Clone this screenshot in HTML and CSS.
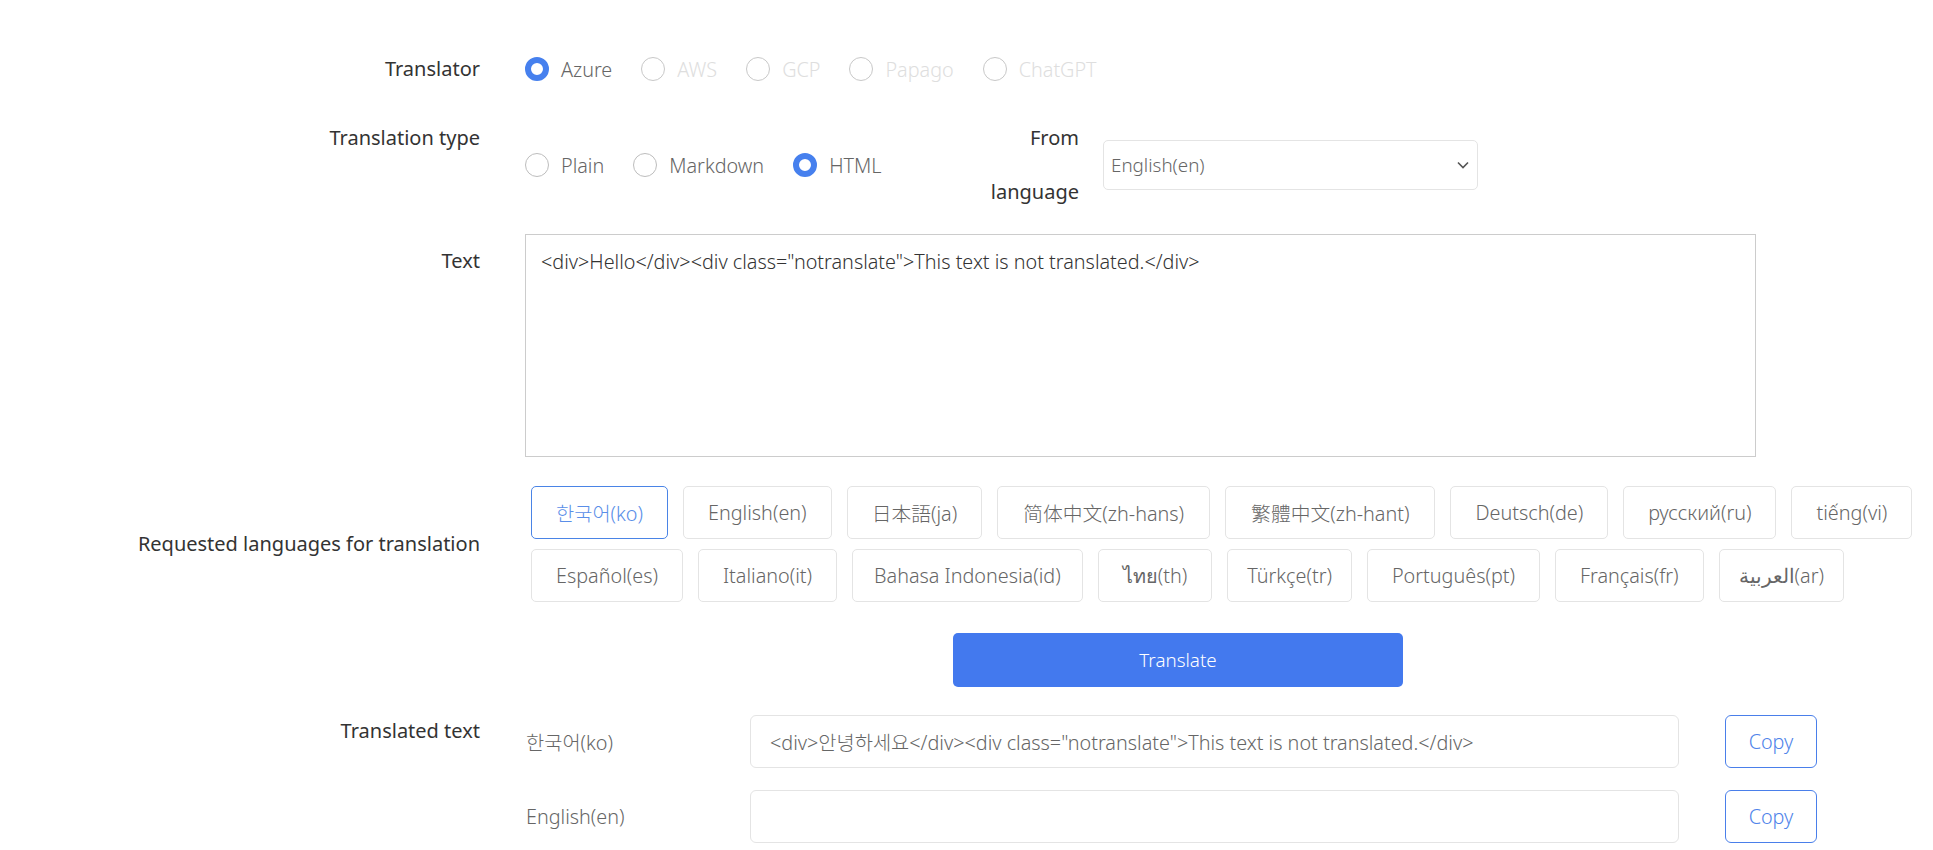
FILE: index.html
```html
<!DOCTYPE html>
<html lang="en">
<head>
<meta charset="utf-8">
<title>Translator</title>
<link rel="stylesheet" href="styles.css">
</head>
<body>
<div class="page">
  <div class="row row-translator">
    <div class="label">Translator</div>
    <div class="content radios">
      <label class="opt"><input type="radio" name="translator" checked><span>Azure</span></label>
      <label class="opt disabled"><input type="radio" name="translator" disabled><span>AWS</span></label>
      <label class="opt disabled"><input type="radio" name="translator" disabled><span>GCP</span></label>
      <label class="opt disabled"><input type="radio" name="translator" disabled><span>Papago</span></label>
      <label class="opt disabled"><input type="radio" name="translator" disabled><span>ChatGPT</span></label>
    </div>
  </div>

  <div class="row row-type">
    <div class="label">Translation type</div>
    <div class="content type-content">
      <div class="radios type-radios">
        <label class="opt"><input type="radio" name="type"><span>Plain</span></label>
        <label class="opt"><input type="radio" name="type"><span>Markdown</span></label>
        <label class="opt"><input type="radio" name="type" checked><span>HTML</span></label>
      </div>
      <div class="sublabel">From language</div>
      <div class="select">
        <span>English(en)</span>
        <svg class="chev" width="12" height="8" viewBox="0 0 12 8"><path d="M1 1.5 L6 6.5 L11 1.5" fill="none" stroke="#555" stroke-width="1.6"/></svg>
      </div>
    </div>
  </div>

  <div class="row row-text">
    <div class="label">Text</div>
    <div class="content">
      <textarea class="source" spellcheck="false">&lt;div&gt;Hello&lt;/div&gt;&lt;div class="notranslate"&gt;This text is not translated.&lt;/div&gt;</textarea>
    </div>
  </div>

  <div class="row row-langs">
    <div class="label">Requested languages for translation</div>
    <div class="content langs">
      <div class="lang-row">
        <button class="lang active" lang="ko">한국어(ko)</button>
        <button class="lang">English(en)</button>
        <button class="lang jp" lang="ja">日本語(ja)</button>
        <button class="lang sc" lang="zh-Hans">简体中文(zh-hans)</button>
        <button class="lang tc" lang="zh-Hant">繁體中文(zh-hant)</button>
        <button class="lang">Deutsch(de)</button>
        <button class="lang">русский(ru)</button>
        <button class="lang">tiếng(vi)</button>
      </div>
      <div class="lang-row">
        <button class="lang">Español(es)</button>
        <button class="lang">Italiano(it)</button>
        <button class="lang narrow">Bahasa Indonesia(id)</button>
        <button class="lang">ไทย(th)</button>
        <button class="lang narrower">Türkçe(tr)</button>
        <button class="lang">Português(pt)</button>
        <button class="lang">Français(fr)</button>
        <button class="lang narrower">العربية(ar)</button>
      </div>
    </div>
  </div>

  <div class="row row-action">
    <div class="label"></div>
    <div class="content action">
      <button class="translate">Translate</button>
    </div>
  </div>

  <div class="row row-result">
    <div class="label">Translated text</div>
    <div class="content results">
      <div class="result">
        <div class="res-lang" lang="ko">한국어(ko)</div>
        <input class="res-text" type="text" readonly value="&lt;div&gt;안녕하세요&lt;/div&gt;&lt;div class=&quot;notranslate&quot;&gt;This text is not translated.&lt;/div&gt;">
        <button class="copy">Copy</button>
      </div>
      <div class="result">
        <div class="res-lang">English(en)</div>
        <input class="res-text" type="text" readonly value="">
        <button class="copy">Copy</button>
      </div>
    </div>
  </div>
</div>
</body>
</html>
```
FILE: styles.css
```css
* { box-sizing: border-box; }
html, body { margin: 0; padding: 0; background: #fff; }
body {
  font-family: "Noto Sans", "Noto Sans CJK KR", sans-serif;
  color: #333;
  overflow: hidden;
}
.page { padding-top: 42px; width: 1933px; }
.row { display: flex; align-items: flex-start; margin-bottom: 15px; }
.label {
  width: 480px;
  flex-shrink: 0;
  text-align: right;
  font-size: 20px;
  line-height: 54px;
  color: #333;
}
.content { margin-left: 45px; flex: 1; min-width: 0; }

/* radios */
.radios { display: flex; align-items: center; height: 54px; gap: 29px; }
.opt { display: flex; align-items: center; gap: 12px; font-size: 19.8px; font-weight: 300; color: #666; cursor: pointer; }
.opt.disabled { color: #dedede; }
.opt input {
  appearance: none;
  -webkit-appearance: none;
  margin: 0;
  width: 24px; height: 24px;
  border-radius: 50%;
  border: 1.5px solid #bdbdbd;
  background: #fff;
  flex-shrink: 0;
}
.opt input:checked { border: 6.5px solid #4680ee; }
.opt.disabled input { border-color: #c8c8c8; }

/* type row */
.type-content { display: flex; align-items: center; height: 108px; }
.type-radios { width: 454px; }
.sublabel {
  width: 100px;
  text-align: right;
  font-size: 20px;
  line-height: 54px;
  color: #333;
}
.select {
  margin-left: 24px;
  width: 375px; height: 50px;
  border: 1px solid #e4e4e4;
  border-radius: 5px;
  display: flex; align-items: center; justify-content: space-between;
  padding: 0 8px 0 7px;
  font-size: 18.8px;
  font-weight: 300;
  color: #666;
}

/* textarea */
.row-text { margin-bottom: 29px; }
.source {
  display: block;
  width: 1231px; height: 223px;
  border: 1px solid #cccccc;
  border-radius: 0;
  padding: 13px 15px;
  font-family: "Noto Sans", "Noto Sans CJK KR", sans-serif;
  font-size: 19.8px;
  font-weight: 300;
  line-height: 28px;
  color: #333;
  resize: none;
  outline: none;
}

/* languages */
.row-langs { align-items: center; margin-bottom: 31px; }
.langs { display: flex; flex-direction: column; gap: 10px; padding-left: 6px; }
.lang-row { display: flex; gap: 15px; flex-wrap: nowrap; }
.lang {
  height: 53px;
  padding: 0 24px;
  border: 1px solid #e4e4e4;
  border-radius: 5px;
  background: #fff;
  font-family: "Noto Sans", "Noto Sans CJK KR", sans-serif;
  font-size: 19.8px;
  font-weight: 300;
  color: #666;
  white-space: nowrap;
  cursor: pointer;
}
.lang.jp { font-family: "Noto Sans", "Noto Sans CJK JP", sans-serif; }
.lang.sc { font-family: "Noto Sans", "Noto Sans CJK SC", sans-serif; padding: 0 25px; }
.lang.tc { font-family: "Noto Sans", "Noto Sans CJK TC", sans-serif; padding: 0 25px; }
.lang.narrow { padding: 0 21px; }
.lang.narrower { padding: 0 19px; }
.lang.active { border-color: #4a84e6; color: #5a8ee8; }

/* translate */
.row-action { margin-bottom: 17px; }
.action { padding-left: 428px; }
.translate {
  width: 450px; height: 54px;
  border: none;
  border-radius: 5px;
  background: #4379ee;
  color: #fff;
  font-family: "Noto Sans", "Noto Sans CJK KR", sans-serif;
  font-size: 18.8px;
  font-weight: 300;
  cursor: pointer;
}

/* results */
.results { display: flex; flex-direction: column; gap: 22px; margin-top: 11px; }
.result { display: flex; align-items: center; }
.res-lang { width: 225px; font-size: 19.8px; font-weight: 300; color: #666; padding-left: 1px; }
.res-text {
  width: 929px; height: 53px;
  border: 1px solid #e4e4e4;
  border-radius: 6px;
  padding: 0 19px;
  font-family: "Noto Sans", "Noto Sans CJK KR", sans-serif;
  font-size: 19.8px;
  font-weight: 300;
  color: #666;
  outline: none;
}
.copy {
  margin-left: 46px;
  width: 92px; height: 53px;
  border: 1px solid #4a7fea;
  border-radius: 6px;
  background: #fff;
  color: #4f84ea;
  font-family: "Noto Sans", "Noto Sans CJK KR", sans-serif;
  font-size: 19.8px;
  font-weight: 300;
  cursor: pointer;
}
```
